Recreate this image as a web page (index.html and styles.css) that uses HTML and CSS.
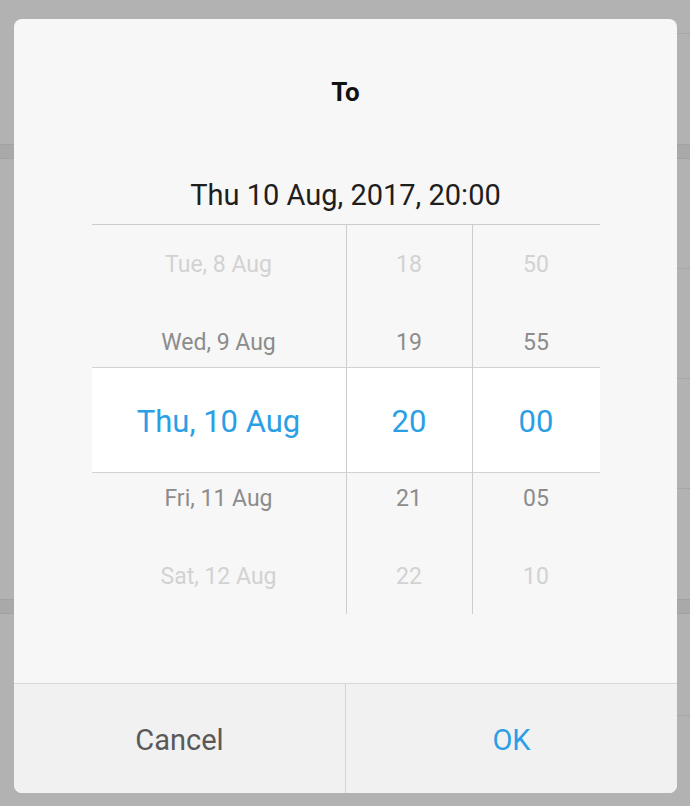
FILE: index.html
```html
<!DOCTYPE html>
<html>
<head>
<meta charset="utf-8">
<link rel="stylesheet" href="styles.css">
</head>
<body>
<div class="backdrop">
  <div class="bg-row h33 line"></div>
  <div class="bg-row h110"></div>
  <div class="bg-band"></div>
  <div class="bg-row h110 line"></div>
  <div class="bg-row h110 line"></div>
  <div class="bg-row h110 line"></div>
  <div class="bg-row h110"></div>
  <div class="bg-band"></div>
  <div class="bg-row h102 line"></div>
</div>

<div class="dialog">
  <div class="title">To</div>
  <div class="current">Thu 10 Aug, 2017, 20:00</div>
  <div class="picker">
    <div class="highlight"></div>
    <div class="col col-day">
      <div class="cell faint">Tue, 8 Aug</div>
      <div class="cell mid">Wed, 9 Aug</div>
      <div class="cell sel">Thu, 10 Aug</div>
      <div class="cell mid">Fri, 11 Aug</div>
      <div class="cell faint">Sat, 12 Aug</div>
    </div>
    <div class="col col-hour">
      <div class="cell faint">18</div>
      <div class="cell mid">19</div>
      <div class="cell sel">20</div>
      <div class="cell mid">21</div>
      <div class="cell faint">22</div>
    </div>
    <div class="col col-min">
      <div class="cell faint">50</div>
      <div class="cell mid">55</div>
      <div class="cell sel">00</div>
      <div class="cell mid">05</div>
      <div class="cell faint">10</div>
    </div>
  </div>
  <div class="spacer"></div>
  <div class="footer">
    <div class="btn cancel">Cancel</div>
    <div class="btn ok">OK</div>
  </div>
</div>
</body>
</html>
```

FILE: styles.css
```css
* { box-sizing: border-box; }
html, body {
  margin: 0;
  padding: 0;
  width: 690px;
  height: 806px;
  overflow: hidden;
  background: #b2b2b2;
  font-family: Roboto, "Noto Sans", "Liberation Sans", sans-serif;
}
.backdrop {
  display: flex;
  flex-direction: column;
}
.bg-row { flex: none; }
.h33 { height: 34px; }
.h110 { height: 110px; }
.h102 { height: 102px; }
.bg-row.line { border-bottom: 1px solid #a6a6a6; margin-left: 40px; }
.bg-band {
  height: 15px;
  background: #a9a9a9;
  border-top: 1px solid #a2a2a2;
  border-bottom: 1px solid #a2a2a2;
}
.dialog {
  position: absolute;
  left: 14px;
  top: 19px;
  width: 663px;
  height: 774px;
  background: #f7f7f7;
  border-radius: 8px;
  overflow: hidden;
  display: flex;
  flex-direction: column;
}
.title {
  margin-top: 58px;
  height: 30px;
  line-height: 30px;
  text-align: center;
  font-size: 26px;
  font-weight: 700;
  color: #111;
}
.current {
  margin-top: 70px;
  height: 34px;
  line-height: 36px;
  text-align: center;
  font-size: 29px;
  color: #1e1e1e;
}
.picker {
  position: relative;
  margin: 13px auto 0;
  width: 508px;
  height: 390px;
  border-top: 1px solid #cdcdcd;
  display: grid;
  grid-template-columns: 255px 126px 127px;
}
.highlight {
  position: absolute;
  left: 0;
  right: 0;
  top: 142px;
  height: 106px;
  background: #ffffff;
  border-top: 1px solid #d2d2d2;
  border-bottom: 1px solid #d2d2d2;
  z-index: 0;
}
.col {
  position: relative;
  z-index: 1;
  display: flex;
  flex-direction: column;
  margin-top: -1px;
}
.col-day, .col-hour { border-right: 1px solid #cdcdcd; }
.cell {
  height: 78px;
  display: flex;
  align-items: center;
  justify-content: center;
  font-size: 23px;
  padding-top: 3px;
}
.cell.faint { color: #d2d2d2; }
.cell.mid { color: #8c8c8c; }
.cell.sel { color: #2b9fe6; font-size: 31px; padding-top: 4px; }
.spacer { flex: 1; }
.footer {
  height: 110px;
  flex: none;
  background: #f1f1f1;
  border-top: 1px solid #d8d8d8;
  display: grid;
  grid-template-columns: 332px 1fr;
}
.btn {
  display: flex;
  align-items: center;
  justify-content: center;
  font-size: 29px;
  padding-top: 3px;
}
.cancel { color: #595959; border-right: 1px solid #d5d5d5; }
.ok { color: #2b9fe6; }
```
